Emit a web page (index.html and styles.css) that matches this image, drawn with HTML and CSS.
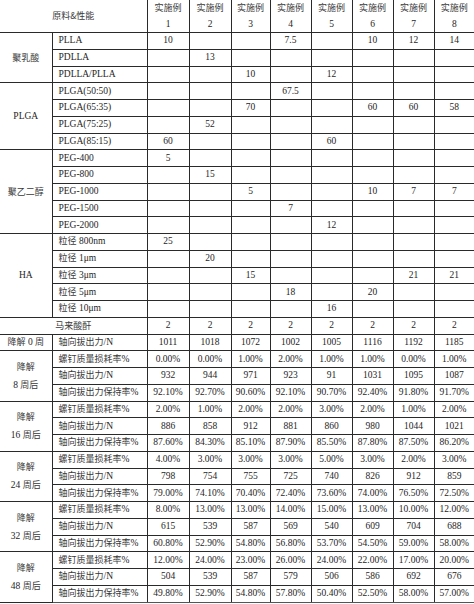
FILE: index.html
```html
<!DOCTYPE html>
<html lang="zh">
<head>
<meta charset="utf-8">
<title>实施例</title>
<link rel="stylesheet" href="styles.css">
</head>
<body>
<table class="sheet">
<colgroup>
<col class="c-grp"><col class="c-item">
<col class="c-a"><col class="c-a"><col class="c-b"><col class="c-d"><col class="c-d"><col class="c-d"><col class="c-d"><col class="c-e">
</colgroup>
<tr class="head">
<td colspan="2" class="zh">原料&amp;性能</td>
<td><span class="zh">实施例</span><br>1</td>
<td><span class="zh">实施例</span><br>2</td>
<td><span class="zh">实施例</span><br>3</td>
<td><span class="zh">实施例</span><br>4</td>
<td><span class="zh">实施例</span><br>5</td>
<td><span class="zh">实施例</span><br>6</td>
<td><span class="zh">实施例</span><br>7</td>
<td><span class="zh">实施例</span><br>8</td>
</tr>
<tr class="g"><td rowspan="3" class="grp zh">聚乳酸</td><td class="item">PLLA</td><td>10</td><td></td><td></td><td>7.5</td><td></td><td>10</td><td>12</td><td>14</td></tr>
<tr><td class="item">PDLLA</td><td></td><td>13</td><td></td><td></td><td></td><td></td><td></td><td></td></tr>
<tr><td class="item">PDLLA/PLLA</td><td></td><td></td><td>10</td><td></td><td>12</td><td></td><td></td><td></td></tr>
<tr class="g"><td rowspan="4" class="grp">PLGA</td><td class="item">PLGA(50:50)</td><td></td><td></td><td></td><td>67.5</td><td></td><td></td><td></td><td></td></tr>
<tr><td class="item">PLGA(65:35)</td><td></td><td></td><td>70</td><td></td><td></td><td>60</td><td>60</td><td>58</td></tr>
<tr><td class="item">PLGA(75:25)</td><td></td><td>52</td><td></td><td></td><td></td><td></td><td></td><td></td></tr>
<tr><td class="item">PLGA(85:15)</td><td>60</td><td></td><td></td><td></td><td>60</td><td></td><td></td><td></td></tr>
<tr class="g"><td rowspan="5" class="grp zh">聚乙二醇</td><td class="item">PEG-400</td><td>5</td><td></td><td></td><td></td><td></td><td></td><td></td><td></td></tr>
<tr><td class="item">PEG-800</td><td></td><td>15</td><td></td><td></td><td></td><td></td><td></td><td></td></tr>
<tr><td class="item">PEG-1000</td><td></td><td></td><td>5</td><td></td><td></td><td>10</td><td>7</td><td>7</td></tr>
<tr><td class="item">PEG-1500</td><td></td><td></td><td></td><td>7</td><td></td><td></td><td></td><td></td></tr>
<tr><td class="item">PEG-2000</td><td></td><td></td><td></td><td></td><td>12</td><td></td><td></td><td></td></tr>
<tr class="g"><td rowspan="5" class="grp">HA</td><td class="item"><span class="zh">粒径</span> 800nm</td><td>25</td><td></td><td></td><td></td><td></td><td></td><td></td><td></td></tr>
<tr><td class="item"><span class="zh">粒径</span> 1μm</td><td></td><td>20</td><td></td><td></td><td></td><td></td><td></td><td></td></tr>
<tr><td class="item"><span class="zh">粒径</span> 3μm</td><td></td><td></td><td>15</td><td></td><td></td><td></td><td>21</td><td>21</td></tr>
<tr><td class="item"><span class="zh">粒径</span> 5μm</td><td></td><td></td><td></td><td>18</td><td></td><td>20</td><td></td><td></td></tr>
<tr><td class="item"><span class="zh">粒径</span> 10μm</td><td></td><td></td><td></td><td></td><td>16</td><td></td><td></td><td></td></tr>
<tr class="g"><td colspan="2" class="zh">马来酸酐</td><td>2</td><td>2</td><td>2</td><td>2</td><td>2</td><td>2</td><td>2</td><td>2</td></tr>
<tr class="g"><td><span class="zh">降解</span> 0 <span class="zh">周</span></td><td class="item"><span class="zh">轴向拔出力</span>/N</td><td>1011</td><td>1018</td><td>1072</td><td>1002</td><td>1005</td><td>1116</td><td>1192</td><td>1185</td></tr>
<tr class="g"><td rowspan="3" class="grp"><span class="zh">降解</span><br>8 <span class="zh">周后</span></td><td class="item"><span class="zh">螺钉质量损耗率</span>%</td><td>0.00%</td><td>0.00%</td><td>1.00%</td><td>2.00%</td><td>1.00%</td><td>1.00%</td><td>0.00%</td><td>1.00%</td></tr>
<tr><td class="item"><span class="zh">轴向拔出力</span>/N</td><td>932</td><td>944</td><td>971</td><td>923</td><td>91</td><td>1031</td><td>1095</td><td>1087</td></tr>
<tr><td class="item"><span class="zh">轴向拔出力保持率</span>%</td><td>92.10%</td><td>92.70%</td><td>90.60%</td><td>92.10%</td><td>90.70%</td><td>92.40%</td><td>91.80%</td><td>91.70%</td></tr>
<tr class="g"><td rowspan="3" class="grp"><span class="zh">降解</span><br>16 <span class="zh">周后</span></td><td class="item"><span class="zh">螺钉质量损耗率</span>%</td><td>2.00%</td><td>1.00%</td><td>2.00%</td><td>2.00%</td><td>3.00%</td><td>2.00%</td><td>1.00%</td><td>2.00%</td></tr>
<tr><td class="item"><span class="zh">轴向拔出力</span>/N</td><td>886</td><td>858</td><td>912</td><td>881</td><td>860</td><td>980</td><td>1044</td><td>1021</td></tr>
<tr><td class="item"><span class="zh">轴向拔出力保持率</span>%</td><td>87.60%</td><td>84.30%</td><td>85.10%</td><td>87.90%</td><td>85.50%</td><td>87.80%</td><td>87.50%</td><td>86.20%</td></tr>
<tr class="g"><td rowspan="3" class="grp"><span class="zh">降解</span><br>24 <span class="zh">周后</span></td><td class="item"><span class="zh">螺钉质量损耗率</span>%</td><td>4.00%</td><td>3.00%</td><td>3.00%</td><td>3.00%</td><td>5.00%</td><td>3.00%</td><td>2.00%</td><td>3.00%</td></tr>
<tr><td class="item"><span class="zh">轴向拔出力</span>/N</td><td>798</td><td>754</td><td>755</td><td>725</td><td>740</td><td>826</td><td>912</td><td>859</td></tr>
<tr><td class="item"><span class="zh">轴向拔出力保持率</span>%</td><td>79.00%</td><td>74.10%</td><td>70.40%</td><td>72.40%</td><td>73.60%</td><td>74.00%</td><td>76.50%</td><td>72.50%</td></tr>
<tr class="g"><td rowspan="3" class="grp"><span class="zh">降解</span><br>32 <span class="zh">周后</span></td><td class="item"><span class="zh">螺钉质量损耗率</span>%</td><td>8.00%</td><td>13.00%</td><td>13.00%</td><td>14.00%</td><td>15.00%</td><td>13.00%</td><td>10.00%</td><td>12.00%</td></tr>
<tr><td class="item"><span class="zh">轴向拔出力</span>/N</td><td>615</td><td>539</td><td>587</td><td>569</td><td>540</td><td>609</td><td>704</td><td>688</td></tr>
<tr><td class="item"><span class="zh">轴向拔出力保持率</span>%</td><td>60.80%</td><td>52.90%</td><td>54.80%</td><td>56.80%</td><td>53.70%</td><td>54.50%</td><td>59.00%</td><td>58.00%</td></tr>
<tr class="g"><td rowspan="3" class="grp"><span class="zh">降解</span><br>48 <span class="zh">周后</span></td><td class="item"><span class="zh">螺钉质量损耗率</span>%</td><td>12.00%</td><td>24.00%</td><td>23.00%</td><td>26.00%</td><td>24.00%</td><td>22.00%</td><td>17.00%</td><td>20.00%</td></tr>
<tr><td class="item"><span class="zh">轴向拔出力</span>/N</td><td>504</td><td>539</td><td>587</td><td>579</td><td>506</td><td>586</td><td>692</td><td>676</td></tr>
<tr class="last"><td class="item"><span class="zh">轴向拔出力保持率</span>%</td><td>49.80%</td><td>52.90%</td><td>54.80%</td><td>57.80%</td><td>50.40%</td><td>52.50%</td><td>58.00%</td><td>57.00%</td></tr>
</table>
</body>
</html>
```
FILE: styles.css
```css
html, body {
  margin: 0;
  padding: 0;
  background: #ffffff;
}

.sheet {
  border-collapse: collapse;
  table-layout: fixed;
  width: 474px;
  font-family: "Liberation Serif", "Noto Sans CJK SC", serif;
  font-size: 9.5px;
  color: #1e1e1e;
}

.c-grp { width: 52px; }
.c-item { width: 95px; }
.c-a { width: 42px; }
.c-b { width: 39px; }
.c-d { width: 41px; }
.c-e { width: 40px; }

.sheet td {
  border: 1px solid #2a2a2a;
  padding: 0;
  height: 15.76px;
  line-height: 11px;
  text-align: center;
  vertical-align: middle;
  white-space: nowrap;
  overflow: hidden;
}

.sheet tr > td:first-child {
  border-left: none;
}

.sheet tr > td:last-child {
  border-right: none;
}

.sheet .head td {
  border-top: none;
  height: 31px;
  line-height: 16px;
}

.sheet .g td {
  border-top-color: #111111;
}

.sheet .last td {
  border-bottom: 1px solid #555555;
}

.sheet td.grp {
  line-height: 18px;
}

.sheet td.item {
  text-align: left;
  padding-left: 6px;
}

.zh {
  font-family: "Noto Sans CJK SC", sans-serif;
  font-size: 9px;
  line-height: 10px;
  color: #3a3a3a;
}

.head .zh {
  line-height: 16px;
}
```
